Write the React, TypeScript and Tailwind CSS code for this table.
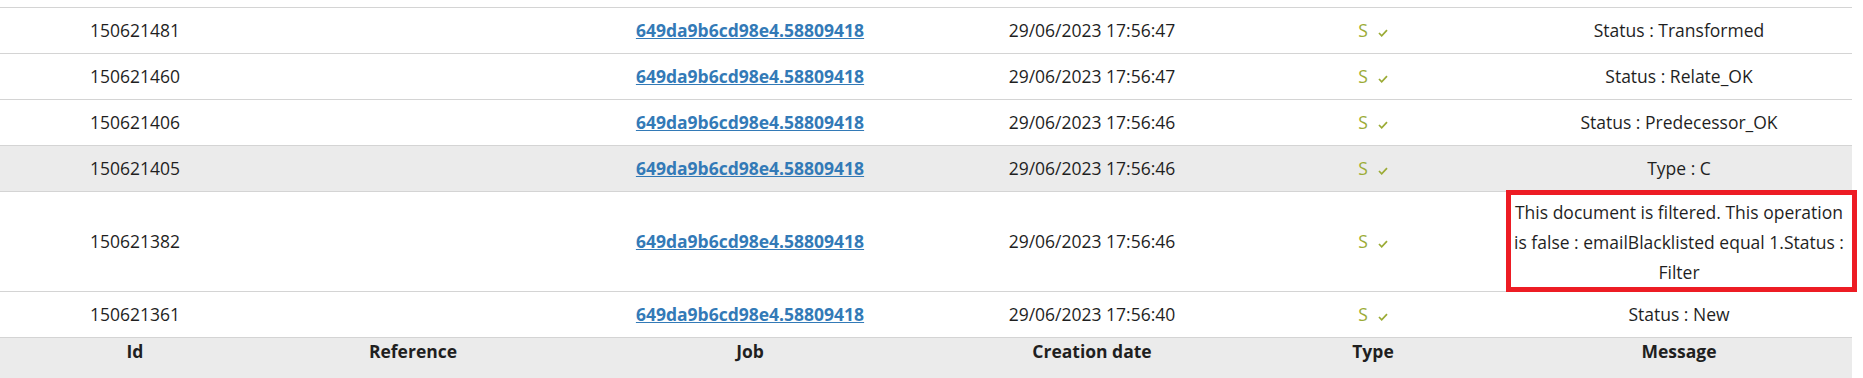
import React from 'react'

type Row = {
  id: string
  job: string
  date: string
  message: string[]
  highlight?: boolean
  flagged?: boolean
}

const ROWS: Row[] = [
  { id: '150621481', job: '649da9b6cd98e4.58809418', date: '29/06/2023 17:56:47', message: ['Status : Transformed'] },
  { id: '150621460', job: '649da9b6cd98e4.58809418', date: '29/06/2023 17:56:47', message: ['Status : Relate_OK'] },
  { id: '150621406', job: '649da9b6cd98e4.58809418', date: '29/06/2023 17:56:46', message: ['Status : Predecessor_OK'] },
  { id: '150621405', job: '649da9b6cd98e4.58809418', date: '29/06/2023 17:56:46', message: ['Type : C'], highlight: true },
  {
    id: '150621382',
    job: '649da9b6cd98e4.58809418',
    date: '29/06/2023 17:56:46',
    message: [
      'This document is filtered. This operation',
      'is false : emailBlacklisted equal 1.Status :',
      'Filter',
    ],
    flagged: true,
  },
  { id: '150621361', job: '649da9b6cd98e4.58809418', date: '29/06/2023 17:56:40', message: ['Status : New'] },
]

const HEADERS = ['Id', 'Reference', 'Job', 'Creation date', 'Type', 'Message']

function CheckIcon() {
  return (
    <svg width="10" height="8" viewBox="0 0 10 8" className="ml-[10px] inline-block align-baseline">
      <path d="M1 4 L3.7 6.8 L9 1.2" fill="none" stroke="#9bab35" strokeWidth="1.7" />
    </svg>
  )
}

const cell = 'border-t border-[#d4d4d4] px-2 text-center align-middle'
const td = `${cell} py-[8px] leading-[29px]`
const th = 'border-t border-[#d4d4d4] px-2 pt-0 pb-[16px] text-center align-top font-bold leading-[27px]'

export default function App() {
  return (
    <div
      className="min-h-screen bg-white pt-[7px] text-[17.5px] text-[#1f1f1f]"
      style={{ fontFamily: '"Open Sans", "Noto Sans", sans-serif' }}
    >
      <table className="w-[1852px] table-fixed border-collapse">
        <colgroup>
          <col className="w-[270px]" />
          <col className="w-[286px]" />
          <col className="w-[388px]" />
          <col className="w-[296px]" />
          <col className="w-[266px]" />
          <col className="w-[346px]" />
        </colgroup>
        <tbody>
          {ROWS.map((row) => (
            <tr key={row.id} className={row.highlight ? 'bg-[#ebebeb]' : 'bg-white'}>
              <td className={td}>{row.id}</td>
              <td className={td}></td>
              <td className={td}>
                <a href="#" className="font-bold text-[#337ab7] underline">
                  {row.job}
                </a>
              </td>
              <td className={td}>{row.date}</td>
              <td className={td}>
                <span className="text-[#9bab35]">S</span>
                <CheckIcon />
              </td>
              <td
                className={`${cell} relative ${
                  row.flagged ? 'pt-[5px] pb-[4px] leading-[30px]' : 'py-[8px] leading-[29px]'
                }`}
              >
                {row.message.map((line, i) => (
                  <React.Fragment key={i}>
                    {i > 0 && <br />}
                    {line}
                  </React.Fragment>
                ))}
                {/* red highlight around the filtered message */}
                {row.flagged && (
                  <div className="pointer-events-none absolute -top-[2px] -bottom-[1px] left-0 -right-[5px] border-[5px] border-[#ed1c24]" />
                )}
              </td>
            </tr>
          ))}
          <tr className="bg-[#ebebeb]">
            {HEADERS.map((h) => (
              <th key={h} className={th}>
                {h}
              </th>
            ))}
          </tr>
        </tbody>
      </table>
    </div>
  )
}
